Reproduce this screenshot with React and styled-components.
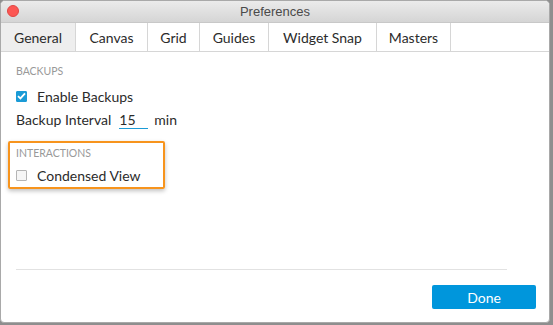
import React from "react";
import styled, { createGlobalStyle } from "styled-components";

const Global = createGlobalStyle`
  html, body { margin: 0; padding: 0; background: #8e8e8e; }
  body { width: 553px; height: 325px; overflow: hidden; font-family: Lato, "Open Sans", sans-serif; }
`;

const Window = styled.div`
  width: 550px;
  height: 323px;
  background: #fff;
  border: 1px solid #a9a9a9;
  border-radius: 5px 5px 4px 4px;
  display: flex;
  flex-direction: column;
  overflow: hidden;
  box-sizing: border-box;
`;

const TitleBar = styled.div`
  height: 21px;
  flex: none;
  background: linear-gradient(#ebebeb, #d5d5d5);
  border-bottom: 1px solid #c8c8c8;
  position: relative;
  display: flex;
  align-items: center;
  justify-content: center;
  font-family: "Liberation Sans", Arial, sans-serif;
  font-size: 13px;
  color: #4a4a4a;
`;

const CloseDot = styled.span`
  position: absolute;
  left: 6px;
  top: 4px;
  width: 12px;
  height: 12px;
  border-radius: 50%;
  background: #fc5753;
  border: 0.5px solid #df4744;
  box-sizing: border-box;
`;

const TabBar = styled.div`
  display: flex;
  height: 29px;
  flex: none;
  border-bottom: 1px solid #d6d6d6;
  box-sizing: border-box;
`;

const Tab = styled.div`
  width: ${(p) => p.$w}px;
  box-sizing: border-box;
  border-right: 1px solid #d6d6d6;
  background: ${(p) => (p.$active ? "#eeeeee" : "#fff")};
  display: flex;
  align-items: center;
  justify-content: center;
  font-size: 14px;
  color: #2b2b2b;
  padding-top: 1px;
`;

const Content = styled.div`
  flex: 1;
  padding: 13px 14px 0 15px;
  display: flex;
  flex-direction: column;
`;

const SectionLabel = styled.div`
  font-size: 10.5px;
  color: #999;
  text-transform: uppercase;
  line-height: 13px;
`;

const Row = styled.label`
  display: flex;
  align-items: center;
  font-size: 14px;
  color: #2b2b2b;
  height: 20px;
  margin-top: ${(p) => p.$mt || 0}px;
`;

const Check = styled.span`
  width: 11px;
  height: 11px;
  box-sizing: border-box;
  border: 1px solid ${(p) => (p.$on ? "#1b9bd6" : "#b5b5b5")};
  background: ${(p) => (p.$on ? "#1b9bd6" : "#f6f6f6")};
  border-radius: 1px;
  margin-right: 10px;
  display: flex;
  align-items: center;
  justify-content: center;
`;

const NumInput = styled.span`
  display: inline-block;
  width: 29px;
  margin: 0 6px 0 8px;
  border-bottom: 1px solid #1b9bd6;
  box-sizing: border-box;
  line-height: 17px;
  position: relative;
  top: 1px;
`;

const Highlight = styled.div`
  margin: 12px 0 0 -8px;
  width: 157px;
  box-sizing: border-box;
  border: 2px solid #f7941d;
  border-radius: 2px;
  box-shadow: 0 2px 4px rgba(0, 0, 0, 0.25);
  padding: 4px 0 2px 6px;
`;

const Spacer = styled.div`
  flex: 1;
`;

const Divider = styled.div`
  height: 1px;
  background: #e2e2e2;
  margin: 0 28px 0 0;
`;

const Footer = styled.div`
  display: flex;
  justify-content: flex-end;
  padding: 15px 13px 13px 0;
`;

const DoneButton = styled.button`
  width: 104px;
  height: 24px;
  border: none;
  border-radius: 2px;
  background: #0096dc;
  color: #fff;
  font-family: Lato, sans-serif;
  font-size: 14px;
  padding: 0;
`;

const tabs = [
  ["General", 75, true],
  ["Canvas", 72],
  ["Grid", 52],
  ["Guides", 69],
  ["Widget Snap", 108],
  ["Masters", 74],
];

export default function App() {
  return (
    <>
      <Global />
      <Window>
        <TitleBar>
          <CloseDot />
          Preferences
        </TitleBar>
        <TabBar>
          {tabs.map(([t, w, a]) => (
            <Tab key={t} $w={w} $active={a}>
              {t}
            </Tab>
          ))}
        </TabBar>
        <Content>
          <SectionLabel>Backups</SectionLabel>
          <Row $mt={8}>
            <Check $on>
              <svg width="9" height="8" viewBox="0 0 9 8">
                <path d="M1 4.2 L3.4 6.4 L8 1.4" stroke="#fff" strokeWidth="1.8" fill="none" />
              </svg>
            </Check>
            Enable Backups
          </Row>
          <Row $mt={3}>
            Backup Interval
            <NumInput>15</NumInput>
            min
          </Row>
          <Highlight>
            <SectionLabel>Interactions</SectionLabel>
            <Row $mt={5}>
              <Check />
              Condensed View
            </Row>
          </Highlight>
          <Spacer />
          <Divider />
        </Content>
        <Footer>
          <DoneButton>Done</DoneButton>
        </Footer>
      </Window>
    </>
  );
}
